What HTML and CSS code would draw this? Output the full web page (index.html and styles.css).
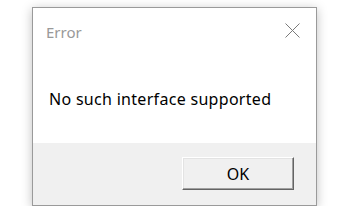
FILE: index.html
```html
<!DOCTYPE html>
<html lang="en">
<head>
  <meta charset="UTF-8" />
  <title>Error</title>
  <link rel="stylesheet" href="styles.css">
</head>
<body>
  <div class="dialog">
    <div class="titlebar">
      <span class="title">Error</span>
      <svg class="close" width="15" height="15" viewBox="0 0 15 15">
        <path d="M0.5 0.5 L14.5 14.5 M14.5 0.5 L0.5 14.5" stroke="#7a7a7a" stroke-width="1" fill="none"/>
      </svg>
    </div>
    <div class="message">No such interface supported</div>
    <div class="footer">
      <button class="btn">OK</button>
    </div>
  </div>
</body>
</html>
```

FILE: styles.css
```css
* { margin: 0; padding: 0; box-sizing: border-box; }
body {
  background: #fff;
  font-family: 'Noto Sans', sans-serif;
}
.dialog {
  margin: 7px 0 0 32px;
  width: 285px;
  height: 199px;
  border: 1px solid #9a9a9a;
  background: #fff;
  box-shadow: 0 2px 10px rgba(0, 0, 0, 0.25);
  display: flex;
  flex-direction: column;
}
.titlebar {
  display: flex;
  justify-content: space-between;
  align-items: flex-start;
  padding: 14px 16px 0 13px;
}
.title {
  font-size: 15px;
  line-height: 20px;
  color: #999;
}
.close {
  margin-top: 1px;
}
.message {
  flex: 1;
  margin-top: 47px;
  padding-left: 16px;
  font-size: 16px;
  letter-spacing: 0.3px;
  line-height: 20px;
  color: #000;
}
.footer {
  height: 62px;
  background: #f0f0f0;
  display: flex;
  justify-content: flex-end;
  align-items: flex-start;
  padding: 14px 22px 0 0;
}
.btn {
  width: 112px;
  height: 33px;
  font-family: 'Noto Sans', sans-serif;
  font-size: 16px;
  color: #000;
  background: #f0f0f0;
  border: 1px solid;
  border-color: #fff #646464 #646464 #fff;
  box-shadow: inset -1px -1px 0 #a0a0a0, inset 1px 1px 0 #e3e3e3;
}
```
